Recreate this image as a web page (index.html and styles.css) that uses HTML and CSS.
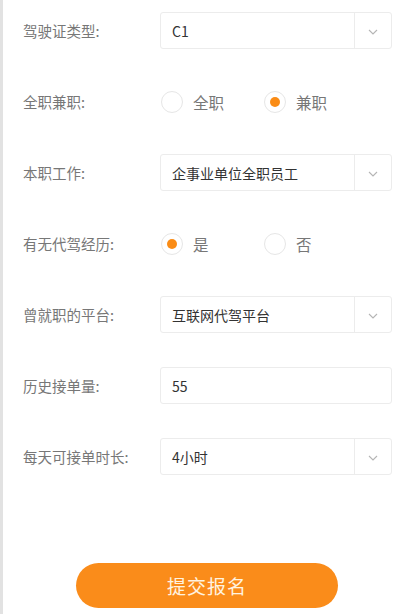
FILE: index.html
```html
<!DOCTYPE html>
<html lang="zh">
<head>
<meta charset="utf-8">
<link rel="stylesheet" href="styles.css">
</head>
<body>
<div class="page">
  <div class="form">
    <div class="row">
      <div class="label">驾驶证类型:</div>
      <div class="select"><span class="value">C1</span><span class="arrow"><svg width="10" height="6" viewBox="0 0 10 6"><path d="M1 1l4 4 4-4" fill="none" stroke="#b5b5b5" stroke-width="1.1"/></svg></span></div>
    </div>
    <div class="row">
      <div class="label">全职兼职:</div>
      <div class="radios">
        <div class="radio"><span class="circle"></span><span class="rtext">全职</span></div>
        <div class="radio"><span class="circle on"></span><span class="rtext">兼职</span></div>
      </div>
    </div>
    <div class="row">
      <div class="label">本职工作:</div>
      <div class="select"><span class="value">企事业单位全职员工</span><span class="arrow"><svg width="10" height="6" viewBox="0 0 10 6"><path d="M1 1l4 4 4-4" fill="none" stroke="#b5b5b5" stroke-width="1.1"/></svg></span></div>
    </div>
    <div class="row">
      <div class="label">有无代驾经历:</div>
      <div class="radios">
        <div class="radio"><span class="circle on"></span><span class="rtext">是</span></div>
        <div class="radio"><span class="circle"></span><span class="rtext">否</span></div>
      </div>
    </div>
    <div class="row">
      <div class="label">曾就职的平台:</div>
      <div class="select"><span class="value">互联网代驾平台</span><span class="arrow"><svg width="10" height="6" viewBox="0 0 10 6"><path d="M1 1l4 4 4-4" fill="none" stroke="#b5b5b5" stroke-width="1.1"/></svg></span></div>
    </div>
    <div class="row">
      <div class="label">历史接单量:</div>
      <div class="select input"><span class="value">55</span></div>
    </div>
    <div class="row">
      <div class="label">每天可接单时长:</div>
      <div class="select"><span class="value">4小时</span><span class="arrow"><svg width="10" height="6" viewBox="0 0 10 6"><path d="M1 1l4 4 4-4" fill="none" stroke="#b5b5b5" stroke-width="1.1"/></svg></span></div>
    </div>
  </div>
  <button class="submit">提交报名</button>
</div>
</body>
</html>
```
FILE: styles.css
```css
html, body {
  margin: 0;
  padding: 0;
  background: #fff;
}
body {
  font-family: "Noto Sans CJK SC", "Liberation Sans", sans-serif;
}
.page {
  width: 398px;
  height: 614px;
  box-sizing: border-box;
  border-left: 3px solid #e2e2e2;
  overflow: hidden;
}
.form {
  display: flex;
  flex-direction: column;
  gap: 34px;
  padding: 12px 6px 0 20px;
}
.row {
  display: flex;
  align-items: center;
  min-height: 37px;
}
.label {
  width: 137px;
  flex: none;
  font-size: 14.5px;
  color: #777;
}
.select {
  flex: 1;
  height: 37px;
  box-sizing: border-box;
  border: 1px solid #ececec;
  border-radius: 3px;
  display: flex;
  align-items: center;
}
.value {
  flex: 1;
  padding-left: 11px;
  font-size: 14px;
  color: #333;
}
.arrow {
  width: 37px;
  height: 100%;
  border-left: 1px solid #ececec;
  display: flex;
  align-items: center;
  justify-content: center;
  padding-top: 2px;
  box-sizing: border-box;
}
.radios {
  display: flex;
  gap: 25px;
  padding-left: 1px;
}
.radio {
  display: flex;
  align-items: center;
  gap: 10px;
  width: 78px;
}
.circle {
  width: 22px;
  height: 22px;
  box-sizing: border-box;
  border: 1px solid #e6e6e6;
  border-radius: 50%;
  display: flex;
  align-items: center;
  justify-content: center;
}
.circle.on::after {
  content: "";
  width: 10px;
  height: 10px;
  border-radius: 50%;
  background: #fa8c16;
}
.rtext {
  font-size: 15.5px;
  color: #777;
}
.submit {
  display: block;
  margin: 88px 0 0 73px;
  width: 262px;
  height: 45px;
  border: none;
  border-radius: 23px;
  background: #fa8c1a;
  color: #fff3e0;
  font-family: "Noto Sans CJK SC", sans-serif;
  font-size: 19px;
  letter-spacing: 1px;
  padding: 0;
}
```
